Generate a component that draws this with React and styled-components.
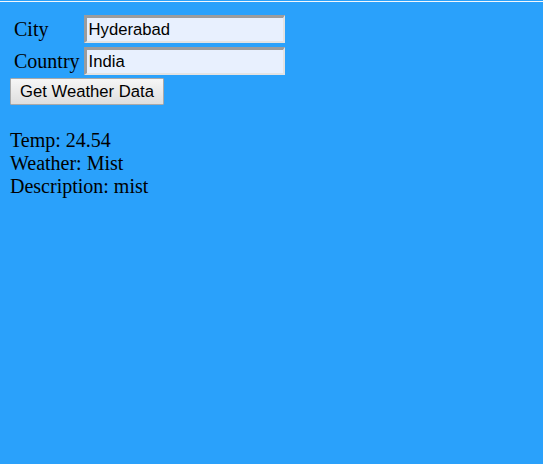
import React from "react";
import styled, { createGlobalStyle } from "styled-components";

const Global = createGlobalStyle`
  html, body {
    margin: 0;
    padding: 0;
    background: #2aa1fb;
  }
  body {
    font-family: "Liberation Serif", "Times New Roman", serif;
    font-size: 20px;
    color: #000;
  }
`;

const Page = styled.div`
  min-height: 464px;
  padding-top: 1px;
  box-sizing: border-box;
`;

const TopRule = styled.div`
  height: 1px;
  background: #f4f8fc;
`;

const Content = styled.div`
  padding: 13px 10px 10px 10px;
`;

const Form = styled.div`
  display: grid;
  grid-template-columns: auto 201px;
  justify-content: start;
  column-gap: 4px;
  row-gap: 4px;
  padding-left: 4px;
  align-items: center;
`;

const Label = styled.label`
  font-size: 20px;
  line-height: 23px;
`;

const Input = styled.input`
  box-sizing: border-box;
  width: 201px;
  height: 28px;
  margin: 0;
  padding: 1px 2px;
  font-family: "Liberation Sans", Arial, sans-serif;
  font-size: 16.67px;
  color: #000;
  background: #e8f0fe;
  border-style: solid;
  border-width: 3px 2px 2px 3px;
  border-color: #9c9c9c #e3e3e3 #e3e3e3 #9c9c9c;
  outline: none;
`;

const Button = styled.button`
  display: block;
  box-sizing: border-box;
  margin-top: 3px;
  width: 154px;
  height: 27px;
  padding: 0;
  font-family: "Liberation Sans", Arial, sans-serif;
  font-size: 16.67px;
  color: #000;
  background: linear-gradient(#f6f6f6, #dedede);
  border: 1px solid #a9a9a9;
  border-radius: 1px;
`;

const Results = styled.div`
  margin-top: 24px;
  font-size: 20px;
  line-height: 23px;
`;

const Line = styled.div``;

export default function App() {
  return (
    <>
      <Global />
      <Page>
        <TopRule />
        <Content>
          <Form>
            <Label htmlFor="city">City</Label>
            <Input id="city" defaultValue="Hyderabad" />
            <Label htmlFor="country">Country</Label>
            <Input id="country" defaultValue="India" />
          </Form>
          <Button>Get Weather Data</Button>
          <Results>
            <Line>Temp: 24.54</Line>
            <Line>Weather: Mist</Line>
            <Line>Description: mist</Line>
          </Results>
        </Content>
      </Page>
    </>
  );
}
